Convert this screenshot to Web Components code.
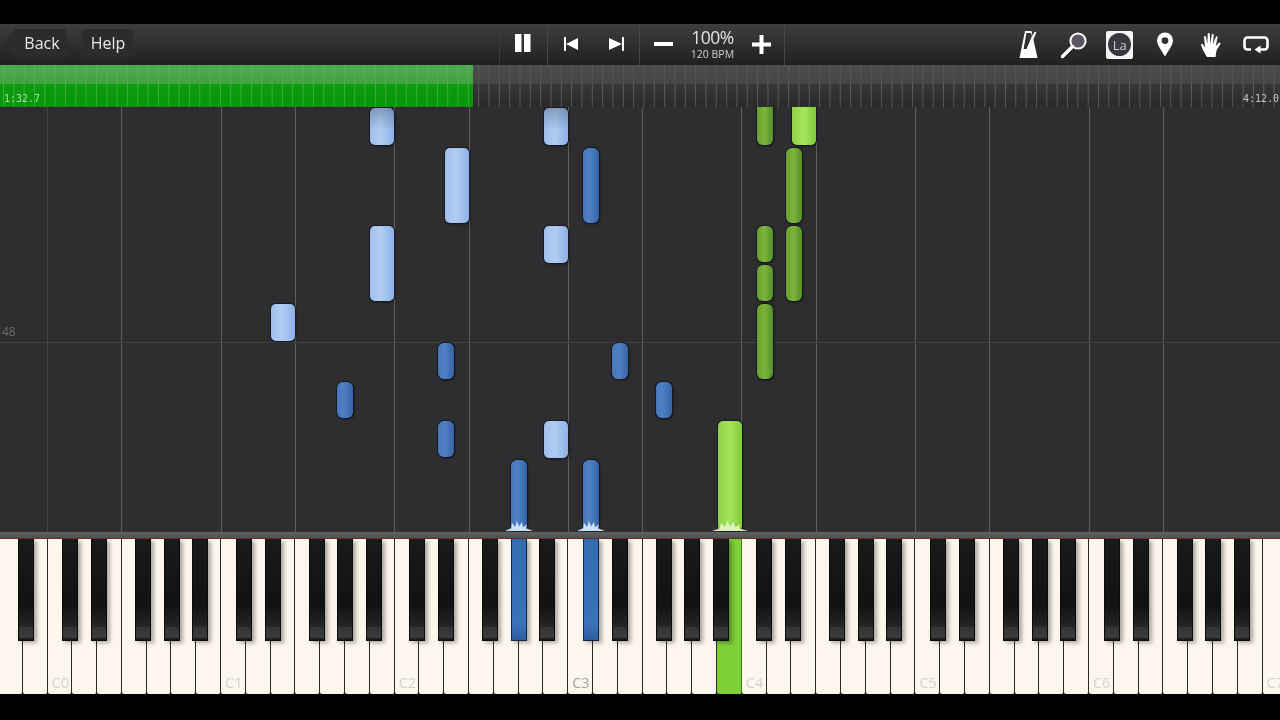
<!DOCTYPE html>
<html>
<head>
<meta charset="utf-8">
<title>Piano</title>
<style>
  html, body { margin: 0; height: 100%; background: #000; overflow: hidden; }
  body { font-family: "Open Sans", "Noto Sans", sans-serif; color: #eee; }
  #app { width: 1280px; height: 720px; display: flex; flex-direction: column; padding: 24px 0 26px; box-sizing: border-box; filter: blur(0.5px); }
</style>
</head>
<body>
<div id="app">
  <top-bar></top-bar>
  <time-bar played="473" elapsed="1:32.7" total="4:12.0"></time-bar>
  <piano-roll>
    <roll-note x="370" y="108" w="24" h="37" kind="light" cut></roll-note>
    <roll-note x="544" y="108" w="24" h="37" kind="light" cut></roll-note>
    <roll-note x="444.5" y="148" w="24" h="75" kind="light"></roll-note>
    <roll-note x="370" y="226" w="24" h="75" kind="light"></roll-note>
    <roll-note x="544" y="226" w="24" h="37" kind="light"></roll-note>
    <roll-note x="271" y="304" w="24" h="37" kind="light"></roll-note>
    <roll-note x="544" y="421" w="24" h="37" kind="light"></roll-note>

    <roll-note x="583" y="148" w="16" h="75" kind="dark"></roll-note>
    <roll-note x="438" y="343" w="16" h="36" kind="dark"></roll-note>
    <roll-note x="612" y="343" w="16" h="36" kind="dark"></roll-note>
    <roll-note x="337" y="382" w="16" h="36" kind="dark"></roll-note>
    <roll-note x="656" y="382" w="16" h="36" kind="dark"></roll-note>
    <roll-note x="438" y="421" w="16" h="36" kind="dark"></roll-note>
    <roll-note x="510.5" y="460" w="16" h="71" kind="dark" hit></roll-note>
    <roll-note x="583" y="460" w="16" h="71" kind="dark" hit></roll-note>

    <roll-note x="757" y="100" w="16" h="45" kind="moss"></roll-note>
    <roll-note x="786" y="148" w="16" h="75" kind="moss"></roll-note>
    <roll-note x="757" y="226" w="16" h="36" kind="moss"></roll-note>
    <roll-note x="786" y="226" w="16" h="75" kind="moss"></roll-note>
    <roll-note x="757" y="265" w="16" h="36" kind="moss"></roll-note>
    <roll-note x="757" y="304" w="16" h="75" kind="moss"></roll-note>

    <roll-note x="792" y="100" w="24" h="45" kind="lime"></roll-note>
    <roll-note x="717.5" y="421" w="24" h="110" kind="lime" hit></roll-note>
  </piano-roll>
  <piano-keys></piano-keys>
</div>

<script>
// Toolbar icons, all white on the dark bar
const ICONS = {
  pause: '<svg width="16" height="18" viewBox="0 0 16 18"><rect x="0" width="6.5" height="18" fill="#fff"/><rect x="9" width="6.5" height="18" fill="#fff"/></svg>',
  prev: '<svg width="14" height="14" viewBox="0 0 14 14"><rect width="2" height="14" fill="#fff"/><path d="M2 7 14 1V13Z" fill="#fff"/></svg>',
  next: '<svg width="15" height="14" viewBox="0 0 15 14"><rect x="13" width="2" height="14" fill="#fff"/><path d="M13 7 0 1V13Z" fill="#fff"/></svg>',
  minus: '<svg width="19" height="4" viewBox="0 0 19 4"><rect width="19" height="4" fill="#fff"/></svg>',
  plus: '<svg width="19" height="19" viewBox="0 0 19 19"><path d="M0 7.5H7.5V0H11.5V7.5H19V11.5H11.5V19H7.5V11.5H0Z" fill="#fff"/></svg>',
  metronome: '<svg width="20" height="28" viewBox="0 0 20 28"><path d="M6 0H12.5L18.5 27H0.5Z M7.4 2 4.6 18H7.6L13 5 12 2Z" fill="#fff" fill-rule="evenodd"/><path d="M8 20 16.5 1" stroke="#fff" stroke-width="2"/></svg>',
  search: '<svg width="28" height="28" viewBox="0 0 28 28"><circle cx="18" cy="10" r="7.6" fill="#5d5562" stroke="#fff" stroke-width="2"/><path d="M12.5 15.5 2.5 25.5" stroke="#fff" stroke-width="3.4" stroke-linecap="round"/></svg>',
  pin: '<svg width="18" height="25" viewBox="0 0 18 25"><path d="M9 0.5A8 8 0 0 1 17 8.5C17 13 12 19 9 24.5 6 19 1 13 1 8.5A8 8 0 0 1 9 0.5ZM9 5.2A3.4 3.4 0 1 0 9 12 3.4 3.4 0 1 0 9 5.2Z" fill="#fff" fill-rule="evenodd"/></svg>',
  hand: '<svg width="20" height="26" viewBox="0 0 20 26"><path d="M6 25C4 22 3.5 20.5 2 18L0 13C-.2 11.500 1.300 11.300 2 12.500L4 15.500 3 5C3 3.600 4.700 3.600 5 5L6.300 12 6.700 2C6.800 .5 8.700 .5 8.800 2L9.400 12 10.800 2.600C11.100 1.200 12.800 1.400 12.700 3L12 12.500 14.800 5C15.400 3.700 16.900 4.300 16.500 5.800L14.800 14 17.700 11C18.800 10 20 11 19.200 12.300L15.500 18.500 14.500 25Z" fill="#fff"/></svg>',
  loop: '<svg width="26" height="18" viewBox="0 0 26 18"><path d="M8 13.500H4.500A3 3 0 0 1 1.500 10.500V4.500A3 3 0 0 1 4.500 1.500H21.500A3 3 0 0 1 24.500 4.500V10.500A3 3 0 0 1 21.500 13.500H15" fill="none" stroke="#fff" stroke-width="2.600"/><path d="M17.500 9.500V17.500L11.500 13.500Z" fill="#fff"/></svg>'
};

class TopBar extends HTMLElement {
  constructor() {
    super();
    this.attachShadow({ mode: 'open' });
    this.shadowRoot.innerHTML = `
      <style>
        :host {
          display: grid;
          grid-template-columns: 500px 48px 92px 145px 1fr;
          height: 41px;
          flex: none;
          background: linear-gradient(#3e3e3e, #303030 45%, #212121);
        }
        .cell { display: flex; align-items: center; justify-content: center; border-right: 1px solid #474747; box-sizing: border-box; }
        .left { justify-content: flex-start; gap: 15px; padding: 0 0 3px 4px; border-right: 1px solid #3a3a3a; }
        .btn {
          height: 28px; display: flex; align-items: center; justify-content: center; box-sizing: border-box;
          font-size: 16px; color: #e8e8e8; background: #2c2c2c; border-radius: 4px; box-shadow: 0 0 1px #444;
        }
        .back { width: 63px; padding-left: 13px; clip-path: polygon(0 50%, 11px 0, 100% 0, 100% 100%, 11px 100%); }
        .help { width: 51px; padding-left: 1px; }
        .pause { padding: 0 2px 3px 0; }
        .seek { justify-content: space-between; padding: 0 15px 2px 16px; }
        .tempo { justify-content: space-between; padding: 0 13px 1px 14px; }
        .speed { display: flex; flex-direction: column; align-items: center; line-height: 1; }
        .speed b { font-weight: 400; font-size: 17.500px; color: #e2e2e2; letter-spacing: -.5px; height: 18px; }
        .speed small { font-size: 10.500px; color: #d0d0d0; margin-top: 2px; }
        .right { display: grid; grid-template-columns: repeat(6, 45.500px); justify-content: end; padding-right: 1px; align-items: center; justify-items: center; }
        .la {
          width: 27px; height: 28px; background: #f4f4f4; border-radius: 2px; display: flex; align-items: center; justify-content: center;
        }
        .la span {
          width: 23px; height: 23px; border-radius: 50%; background: #38383f; color: #ccc; font-size: 13px; display: flex; align-items: center; justify-content: center;
        }
        svg { display: block; }
      </style>
      <div class="cell left">
        <div class="btn back">Back</div>
        <div class="btn help">Help</div>
      </div>
      <div class="cell pause">${ICONS.pause}</div>
      <div class="cell seek">${ICONS.prev}${ICONS.next}</div>
      <div class="cell tempo">
        ${ICONS.minus}
        <div class="speed"><b>100%</b><small>120 BPM</small></div>
        ${ICONS.plus}
      </div>
      <div class="right">
        ${ICONS.metronome}${ICONS.search}
        <div class="la"><span>La</span></div>
        ${ICONS.pin}${ICONS.hand}${ICONS.loop}
      </div>`;
  }
}

class TimeBar extends HTMLElement {
  constructor() {
    super();
    this.attachShadow({ mode: 'open' });
  }
  connectedCallback() {
    const played = this.getAttribute('played');
    // ticks sit 10.33px apart, drawn as svg so they antialias evenly
    let upper = '';
    let lower = '';
    for (let x = 3.5; x < 1280; x += 10.33) {
      upper += `M${x.toFixed(2)} 0V19`;
      lower += `M${x.toFixed(2)} 19V42`;
    }
    this.shadowRoot.innerHTML = `
      <style>
        :host {
          display: flex;
          justify-content: space-between;
          align-items: flex-end;
          height: 42px;
          flex: none;
          position: relative;
          padding: 0 1px 2px 4px;
          box-sizing: border-box;
          background: linear-gradient(#4c4c4c 0, #454545 45%, #363636 46%, #2b2b2b 100%);
          font: 10px/12px "DejaVu Sans Mono", monospace;
        }
        .fill {
          position: absolute; left: 0; top: 0; bottom: 0; width: ${played}px;
          background: linear-gradient(#50aa50 0, #3ea33e 45%, #0f9c12 46%, #069408 100%);
        }
        svg { position: absolute; left: 0; top: 0; }
        span { position: relative; }
        .elapsed { color: #a4e0a4; }
        .total { color: #c4c4c4; }
      </style>
      <div class="fill"></div>
      <svg width="1280" height="42">
        <path d="${upper}" stroke="#fff" stroke-opacity=".08"/>
        <path d="${lower}" stroke="#fff" stroke-opacity=".2"/>
      </svg>
      <span class="elapsed">${this.getAttribute('elapsed')}</span>
      <span class="total">${this.getAttribute('total')}</span>`;
  }
}

class PianoRoll extends HTMLElement {
  constructor() {
    super();
    this.attachShadow({ mode: 'open' });
    // grid lines fall on every C and F
    let lines = '';
    for (let i = 0; i < 7; i++) {
      const c = 47 + i * 173.6;
      lines += `<i style="left:${i ? c : 46.5}px;${i ? '' : 'background:#454546'}"></i><i style="left:${c + 74.4}px"></i>`;
    }
    this.shadowRoot.innerHTML = `
      <style>
        :host { display: block; flex: 1; position: relative; background: #2e2e30; overflow: hidden; }
        i { position: absolute; top: 0; bottom: 0; width: 1px; background: #5e5e5f; }
        .row { position: absolute; left: 0; right: 0; top: 235px; height: 1px; background: #434345; }
        .label { position: absolute; left: 2px; top: 216px; font-size: 12px; color: #6a6a6a; }
        .strip { position: absolute; left: 0; right: 0; bottom: 0; height: 7px; background: linear-gradient(#626262, #505050); border-bottom: 1px solid #6b2c30; box-sizing: border-box; z-index: 2; }
      </style>
      ${lines}
      <div class="row"></div>
      <div class="label">48</div>
      <slot></slot>
      <div class="strip"></div>`;
  }
}

// Note positions are given in page coordinates, the roll starts at y=107
const NOTE_FILL = {
  light: 'linear-gradient(90deg, #9fbfec, #b2ccf2 45%, #8cb2e8)',
  dark: 'linear-gradient(90deg, #4876bb, #5080c4 40%, #3764a8)',
  moss: 'linear-gradient(90deg, #689f2e, #7cb53c 45%, #578f26)',
  lime: 'linear-gradient(90deg, #8fd246, #a6e35c 50%, #80ca3a)'
};
const SPARK_FILL = { dark: '#dcefff', lime: '#e4f8c8' };

class RollNote extends HTMLElement {
  constructor() {
    super();
    this.attachShadow({ mode: 'open' });
  }
  connectedCallback() {
    const get = n => parseFloat(this.getAttribute(n));
    const kind = this.getAttribute('kind');
    const hit = this.hasAttribute('hit');
    const shade = this.hasAttribute('cut') ? 'linear-gradient(rgba(60,70,90,.35), transparent 60%),' : '';
    const spark = hit ? `<svg class="spark" width="${get('w') + 12}" height="11" viewBox="0 0 28 12" preserveAspectRatio="none"><path d="M0 12 6 9 7 3 10 8 12 1 14 7 17 2 18 8 22 5 21 9 28 12Z" fill="${SPARK_FILL[kind]}"/></svg>` : '';
    this.shadowRoot.innerHTML = `
      <style>
        :host {
          display: block; position: absolute; z-index: 1;
          left: ${get('x')}px; top: ${get('y') - 107}px; width: ${get('w')}px; height: ${get('h')}px;
          border-radius: ${get('w') > 20 ? 5 : 6}px;
          background: ${shade} ${NOTE_FILL[kind]};
          box-shadow: 0 0 0 1px rgba(20,24,36,.85), 1px 1px 3px rgba(0,0,0,.5);
        }
        .spark { position: absolute; left: -6px; bottom: 0; opacity: .9; }
      </style>${spark}`;
  }
}

class PianoKeys extends HTMLElement {
  constructor() {
    super();
    this.attachShadow({ mode: 'open' });
    const W = 24.8;
    const names = { 2: 'C0', 9: 'C1', 16: 'C2', 23: 'C3', 30: 'C4', 37: 'C5', 44: 'C6', 51: 'C7' };
    let whites = '';
    for (let i = 0; i < 53; i++) {
      const lit = i === 29 ? ' lit' : '';
      const name = names[i] ? `<em class="${i === 23 ? 'strong' : ''}">${names[i]}</em>` : '';
      whites += `<div class="w${lit}">${name}</div>`;
    }
    // black keys: offsets inside an octave, measured from its C
    const inOctave = [14.5, 43.5, 87.5, 116, 144.5];
    let blacks = '';
    for (let o = -1; o < 7; o++) {
      inOctave.forEach(off => {
        const x = 47.5 + o * 173.6 + off;
        if (x < 0 || x > 1280) return;
        const lit = Math.abs(x - 510.5) < 3 || Math.abs(x - 583) < 3;
        blacks += `<div class="b${lit ? ' lit' : ''}" style="left:${x.toFixed(1)}px"></div>`;
      });
    }
    this.shadowRoot.innerHTML = `
      <style>
        :host { display: block; height: 155px; flex: none; position: relative; overflow: hidden; background: #000; }
        .whites { display: flex; margin-left: -2.100px; height: 100%; }
        .w {
          flex: none; width: ${W}px; height: 100%; box-sizing: border-box; position: relative;
          background: #fdf6ec; border-right: 1px solid #2c2a28; border-radius: 0 0 2px 2px;
        }
        .w.lit { background: #7dd035; border-right-color: #3d7a1c; }
        em { position: absolute; left: 4px; bottom: 2px; font: 14.500px/18px "Open Sans", sans-serif; color: #d6d2c8; }
        em.strong { color: #a5a196; }
        .b {
          position: absolute; top: 0; width: 16px; height: 102px; box-sizing: border-box; border: 1px solid #0b0b0b; border-top: 0;
          background: linear-gradient(#1a1a1a, #121212 65%, #262626 87%, #333 87.5%, #3c3c3c 97%, #111 100%);
          box-shadow: 3px 2px 4px rgba(0,0,0,.32);
        }
        .b.lit {
          background: linear-gradient(#346cb0, #3a72b8 85%, #2e5c9c 100%);
          border-color: #17243a;
        }
      </style>
      <div class="whites">${whites}</div>
      ${blacks}`;
  }
}

customElements.define('top-bar', TopBar);
customElements.define('time-bar', TimeBar);
customElements.define('piano-roll', PianoRoll);
customElements.define('roll-note', RollNote);
customElements.define('piano-keys', PianoKeys);
</script>
</body>
</html>
